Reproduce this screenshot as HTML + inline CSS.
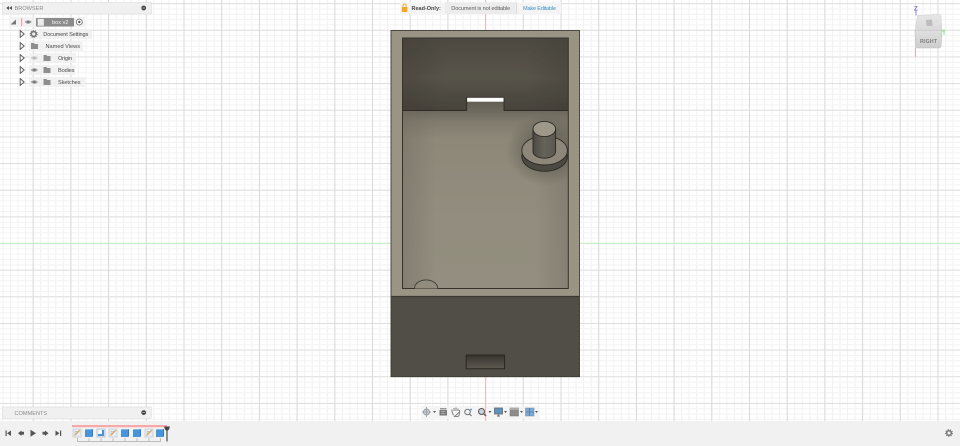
<!DOCTYPE html>
<html><head><meta charset="utf-8">
<style>
html,body{margin:0;padding:0;background:#fff;width:960px;height:446px;overflow:hidden}
svg{display:block;position:absolute;left:0;top:0}
text{font-family:"Liberation Sans",sans-serif;font-size:5.6px;fill:#4a4a4a}
.ui{filter:url(#s)}
</style></head><body>
<svg width="960" height="446" viewBox="0 0 960 446" xmlns="http://www.w3.org/2000/svg">
<defs>
<filter id="s" x="-5%" y="-5%" width="110%" height="110%"><feGaussianBlur stdDeviation="0.38"/></filter>
<filter id="m" x="-5%" y="-5%" width="110%" height="110%"><feGaussianBlur stdDeviation="0.3"/></filter>
<pattern id="minor" patternUnits="userSpaceOnUse" x="2.54" y="3.15" width="7.54" height="5.33">
<path d="M.5 0V5.33" stroke="#f1f1f1" stroke-width="1" fill="none"/>
<path d="M0 .5H7.54" stroke="#f3f3f3" stroke-width="1" fill="none"/>
</pattern>
<pattern id="major" patternUnits="userSpaceOnUse" x="-5" y="3.15" width="37.7" height="26.65">
<path d="M.5 0V26.65" stroke="#d9d9d9" stroke-width="1" fill="none"/>
<path d="M0 .5H37.7" stroke="#dedede" stroke-width="1" fill="none"/>
</pattern>
<linearGradient id="wall" x1="0" y1="0" x2="0" y2="1"><stop offset="0" stop-color="#4c4940"/><stop offset=".55" stop-color="#57534a"/><stop offset="1" stop-color="#46433b"/></linearGradient>
<linearGradient id="wallH" x1="0" y1="0" x2="1" y2="0"><stop offset="0" stop-color="#3a372f" stop-opacity=".35"/><stop offset=".25" stop-color="#3a372f" stop-opacity="0"/><stop offset=".75" stop-color="#3a372f" stop-opacity="0"/><stop offset="1" stop-color="#3a372f" stop-opacity=".3"/></linearGradient>
<linearGradient id="floor" x1="0" y1="0" x2="0" y2="1"><stop offset="0" stop-color="#6d695e"/><stop offset=".06" stop-color="#7f7a6c"/><stop offset=".16" stop-color="#8d8878"/><stop offset=".6" stop-color="#928d7e"/><stop offset="1" stop-color="#938e7f"/></linearGradient>
<linearGradient id="floorH" x1="0" y1="0" x2="1" y2="0"><stop offset="0" stop-color="#6a665b" stop-opacity=".4"/><stop offset=".2" stop-color="#6a665b" stop-opacity="0"/><stop offset=".8" stop-color="#6a665b" stop-opacity="0"/><stop offset="1" stop-color="#6a665b" stop-opacity=".35"/></linearGradient>
<radialGradient id="kshade" cx=".5" cy=".5" r=".5"><stop offset=".55" stop-color="#5f5c52" stop-opacity=".55"/><stop offset="1" stop-color="#5f5c52" stop-opacity="0"/></radialGradient>
<linearGradient id="notch" x1="0" y1="0" x2="0" y2="1"><stop offset="0" stop-color="#5c594f"/><stop offset="1" stop-color="#6d695e"/></linearGradient>
<linearGradient id="cyl" x1="0" y1="0" x2="1" y2="0"><stop offset="0" stop-color="#4c4a43"/><stop offset=".5" stop-color="#66635a"/><stop offset="1" stop-color="#5a574f"/></linearGradient>
<linearGradient id="slot" x1="0" y1="0" x2="0" y2="1"><stop offset="0" stop-color="#35332d"/><stop offset="1" stop-color="#5d5a51"/></linearGradient>
<linearGradient id="cubeT" x1="0" y1="0" x2="0" y2="1"><stop offset="0" stop-color="#e6e6e6"/><stop offset="1" stop-color="#d9d9d9"/></linearGradient>
<linearGradient id="cubeF" x1="0" y1="0" x2="0" y2="1"><stop offset="0" stop-color="#dfdfdf"/><stop offset="1" stop-color="#cdcdcd"/></linearGradient>
<g id="eye"><path d="M-3.8 0Q0-3.4 3.8 0Q0 3.4-3.8 0Z" fill="#a2a2a2"/><circle r="1.3" fill="#777"/></g>
<path id="folder" d="M-3.5-3H-.5L.3-2H3.5V3H-3.5Z" fill="#8e8e8e"/>
<path id="tri" d="M-1.8-3.4L2.2 0L-1.8 3.4Z" fill="#fff" stroke="#555" stroke-width=".9"/>
<g id="sk"><rect x="-4" y="-4" width="8" height="8" fill="#e9edf2" stroke="#b9c3cc" stroke-width=".6"/><path d="M-2.5 2.5L2.8-2.8" stroke="#d8a24a" stroke-width="1.2"/><path d="M-2.5-1.5H1M-2.5 0H-.5" stroke="#8ea6bd" stroke-width=".6"/></g>
<g id="cu"><path d="M-3-4H4V3L3 4H-4V-3Z" fill="#4a94d8"/><path d="M-4-3L-3-4H4L3-3Z" fill="#7db6e8"/><path d="M3-3L4-4V3L3 4Z" fill="#2f78bd"/></g>
<path id="ar" d="M-1.5-1H1.5L0 1Z" fill="#555"/>
<clipPath id="fl"><rect x="402.5" y="110.5" width="165.8" height="178"/></clipPath>
</defs>

<!-- grid -->
<rect width="960" height="446" fill="#fff"/>
<rect width="960" height="446" fill="url(#minor)"/>
<rect width="960" height="446" fill="url(#major)"/>
<rect x="0" y="242.8" width="960" height="1" fill="#c4f2c0"/>
<rect x="485.1" y="0" width="1" height="421" fill="#f5b5b5"/>

<g filter="url(#m)">
<!-- model -->
<rect x="391" y="30.5" width="188.5" height="266" fill="#9a9485"/>
<rect x="402.5" y="110.5" width="165.8" height="178" fill="url(#floor)"/>
<rect x="402.5" y="110.5" width="165.8" height="178" fill="url(#floorH)"/>
<g clip-path="url(#fl)"><ellipse cx="546" cy="150" rx="40" ry="36" fill="url(#kshade)"/></g>
<rect x="402.5" y="38" width="165.8" height="72.5" fill="url(#wall)"/>
<rect x="402.5" y="38" width="165.8" height="72.5" fill="url(#wallH)"/>
<rect x="466.7" y="97.3" width="37.3" height="13.2" fill="url(#notch)"/>
<rect x="466.7" y="97.3" width="37.3" height="4.4" fill="#fff"/>
<path d="M402.5 110.5H466.7V97.3H504V110.5H568.3" fill="none" stroke="#2e2c27" stroke-width=".9"/>
<rect x="402.5" y="38" width="165.8" height="250.5" fill="none" stroke="#34322c" stroke-width="1"/>
<path d="M414.5 288.5A11.6 8.6 0 0 1 437.7 288.5" fill="#918c7d" stroke="#3e3c35" stroke-width=".9"/>
<!-- knob -->
<ellipse cx="544.6" cy="156.5" rx="22.8" ry="14.8" fill="#4b4941" stroke="#2c2a25" stroke-width=".9"/>
<ellipse cx="544.6" cy="150.5" rx="22.8" ry="14.5" fill="#8c8778" stroke="#2c2a25" stroke-width=".9"/>
<path d="M533 129V151.5A11.3 6.7 0 0 0 555.6 151.5V129Z" fill="url(#cyl)" stroke="#2c2a25" stroke-width=".9"/>
<ellipse cx="544.3" cy="129" rx="11.3" ry="7.6" fill="#9d9889" stroke="#2c2a25" stroke-width=".9"/>
<!-- front -->
<rect x="391" y="296" width="188.5" height="80.7" fill="#514e46"/>
<path d="M391 296.5H579.5" stroke="#3b3933" stroke-width="1.2"/>
<rect x="391" y="30.5" width="188.5" height="346.2" fill="none" stroke="#3d3b35" stroke-width=".9"/>
<rect x="466.2" y="355" width="38.4" height="13.8" fill="url(#slot)" stroke="#26241f" stroke-width=".9"/>
</g>

<g class="ui">
<!-- browser panel -->
<rect x="2.3" y="2.5" width="149" height="11.5" fill="#f0f0f0" stroke="#dcdcdc" stroke-width=".6"/>
<path d="M9 6V10L6.2 8ZM12 6V10L9.2 8Z" fill="#555"/>
<text x="14.5" y="10" style="fill:#8a8a8a">BROWSER</text>
<circle cx="143.7" cy="8" r="2.4" fill="#444"/><rect x="142.4" y="7.6" width="2.6" height=".8" fill="#bbb"/>

<rect x="9" y="17" width="76" height="10" fill="#f0f0f0" opacity=".75"/>
<path d="M10.5 24.5L16 19.5V24.5Z" fill="#777"/>
<rect x="21" y="18" width="1.2" height="8" fill="#f3a3a3"/>
<use href="#eye" x="28.2" y="22"/>
<rect x="36" y="18" width="38" height="8.5" rx=".8" fill="#8b8b8b"/>
<rect x="37.5" y="18.6" width="6.5" height="7.3" fill="#ececec" stroke="#999" stroke-width=".4"/>
<text x="52" y="24.2" style="fill:#f4f4f4">box v2</text>
<circle cx="79.3" cy="22" r="3" fill="#fff" stroke="#666" stroke-width=".8"/><circle cx="79.3" cy="22" r="1.2" fill="#555"/>

<rect x="29" y="29" width="63" height="10" fill="#f0f0f0" opacity=".85"/>
<rect x="29" y="41" width="54" height="10" fill="#f0f0f0" opacity=".85"/>
<rect x="29" y="53" width="47" height="10" fill="#f0f0f0" opacity=".85"/>
<rect x="29" y="65" width="46" height="10" fill="#f0f0f0" opacity=".85"/>
<rect x="29" y="77" width="56" height="10" fill="#f0f0f0" opacity=".85"/>

<use href="#tri" x="22" y="34"/><use href="#tri" x="22" y="46"/><use href="#tri" x="22" y="58"/><use href="#tri" x="22" y="70"/><use href="#tri" x="22" y="82"/>

<circle cx="33.7" cy="34" r="2.4" fill="none" stroke="#777" stroke-width="1.6"/>
<circle cx="33.7" cy="34" r="3.5" fill="none" stroke="#777" stroke-width=".9" stroke-dasharray="1.1 1.1"/>
<text x="43.3" y="36" textLength="45">Document Settings</text>

<use href="#folder" x="34.5" y="46"/>
<text x="45.5" y="48" textLength="34.5">Named Views</text>

<use href="#eye" x="34.3" y="58" opacity=".45"/><use href="#folder" x="47" y="58"/>
<text x="58" y="60" textLength="14">Origin</text>
<use href="#eye" x="34.3" y="70"/><use href="#folder" x="47" y="70"/>
<text x="58" y="72" textLength="16.5">Bodies</text>
<use href="#eye" x="34.3" y="82"/><use href="#folder" x="47" y="82"/>
<text x="58" y="84" textLength="22.5">Sketches</text>

<!-- read-only bar -->
<rect x="400" y="2.3" width="161" height="11.7" fill="#f4f4f4"/>
<rect x="445" y="2.3" width="71" height="11.7" fill="#ececec"/>
<rect x="516" y="2.3" width=".8" height="11.7" fill="#d8d8d8"/>
<rect x="401.8" y="7" width="5.6" height="5" rx=".6" fill="#f5a623"/>
<path d="M403 7V5.6A1.6 1.6 0 0 1 406.2 5.6V7" fill="none" stroke="#f5a623" stroke-width=".9"/>
<text x="411.5" y="10" style="fill:#444;font-weight:bold;font-size:5.5px">Read-Only:</text>
<text x="451.3" y="10" textLength="59" style="fill:#5c5c5c">Document is not editable</text>
<text x="523" y="10" textLength="33" style="fill:#3d8fc9">Make Editable</text>

<!-- view cube -->
<path d="M916 10V15.5" stroke="#8a8ae8" stroke-width="1"/>
<text x="914" y="10.5" style="fill:#6a6ae0;font-size:6px;font-weight:bold">Z</text>
<path d="M915.5 47.5V57" stroke="#f2a8a8" stroke-width="1"/>
<path d="M941.5 31H945" stroke="#8fe08f" stroke-width="1"/>
<path d="M944 29V35" stroke="#8fe08f" stroke-width="1"/>
<path d="M917.5 15.5L939 14.5Q940.5 14.5 941 16L942 30.5H915Z" fill="url(#cubeT)" stroke="#cfcfcf" stroke-width=".5"/>
<path d="M915 30.5H942L941 46Q940.5 48 938 48H918Q916 48 915.5 46Z" fill="url(#cubeF)" stroke="#bdbdbd" stroke-width=".6"/>
<path d="M926 20L932 19.5L932.5 26L926.5 26Z" fill="#bdbdbd"/>
<text x="928.5" y="43.2" text-anchor="middle" textLength="17" style="fill:#808080;font-weight:bold;font-size:5.2px">RIGHT</text>

<!-- comments -->
<rect x="2.3" y="407" width="149" height="11.3" fill="#f0f0f0" stroke="#dcdcdc" stroke-width=".6"/>
<text x="14.5" y="414.8" style="fill:#8a8a8a">COMMENTS</text>
<circle cx="143.7" cy="412.6" r="2.4" fill="#444"/><rect x="142.4" y="412.2" width="2.6" height=".8" fill="#bbb"/>

<!-- nav toolbar -->
<rect x="421" y="406" width="119" height="13" fill="#f4f4f4" opacity=".9"/>
<rect x="485.1" y="406" width="1" height="13" fill="#f5b5b5"/>
<circle cx="426.5" cy="412" r="3" fill="#c8d4de" stroke="#888" stroke-width=".8"/>
<path d="M426.5 407V417M422 412H431" stroke="#999" stroke-width=".8"/>
<use href="#ar" x="434.5" y="412"/>
<rect x="439.5" y="410" width="7.5" height="5.5" fill="#777"/><rect x="440" y="408" width="6.5" height="1.5" fill="#999"/><path d="M441 411.5H445.5M441 413.5H445.5" stroke="#ddd" stroke-width=".6"/>
<path d="M453.5 415.5L452 411.5V409.5M454 411V408M456 411V407.5M458 411V408.5M459.5 412V410M459.5 412L459 415.5L458 416.5H454.5Z" fill="#eee" stroke="#666" stroke-width=".8"/>
<circle cx="467.5" cy="412" r="2.8" fill="#eef2f5" stroke="#666" stroke-width=".9"/><path d="M469.5 414L471.5 416" stroke="#666" stroke-width="1"/><path d="M471 408.5V410.5M470 409.5H472" stroke="#4a8cc0" stroke-width=".7"/>
<circle cx="481.5" cy="411.5" r="3" fill="#c8d4de" stroke="#555" stroke-width="1"/><path d="M483.7 413.7L486 416" stroke="#555" stroke-width="1.3"/>
<use href="#ar" x="490" y="412"/>
<rect x="494.5" y="408" width="8" height="6" fill="#5b93bf" stroke="#666" stroke-width=".8"/><path d="M497 416H500M498.5 414.5V416" stroke="#666" stroke-width=".9"/>
<use href="#ar" x="505.5" y="412"/>
<rect x="510" y="408" width="8.5" height="8" fill="#8c8c8c" stroke="#777" stroke-width=".5"/><rect x="510" y="408" width="8.5" height="2" fill="#aaa"/>
<use href="#ar" x="521.5" y="412"/>
<rect x="525.5" y="408" width="8.5" height="8" fill="#7fa9d2" stroke="#6f8ba8" stroke-width=".5"/><path d="M529.7 408V416M525.5 412H534" stroke="#3f6a96" stroke-width=".6"/>
<use href="#ar" x="536.5" y="412"/>

<!-- bottom bar -->
<rect x="0" y="421" width="960" height="25" fill="#f1f1f1"/>
<rect x="5.5" y="430.5" width="1.2" height="5.5" fill="#555"/><path d="M11 430.5V436L7 433.2Z" fill="#555"/>
<path d="M18 433.2L21.5 430.5V436ZM21.5 431.8H24V434.6H21.5Z" fill="#555"/>
<path d="M30.5 429.8L36 433.2L30.5 436.7Z" fill="#555"/>
<path d="M48.5 433.2L45 430.5V436ZM45 431.8H42.5V434.6H45Z" fill="#555"/>
<path d="M55.5 430.5V436L59.5 433.2Z" fill="#555"/><rect x="60" y="430.5" width="1.2" height="5.5" fill="#555"/>

<rect x="72" y="425" width="95" height="2.2" fill="#f7a8a8"/>
<path d="M77.5 438V441.5H160.5V438" fill="none" stroke="#aaa" stroke-width=".7"/>
<path d="M89 438V441.5M101 438V441.5M113 438V441.5M125 438V441.5M137 438V441.5M149 438V441.5" stroke="#aaa" stroke-width=".7"/>
<use href="#sk" x="77" y="433"/>
<use href="#cu" x="89" y="433"/>
<g transform="translate(101 433)"><rect x="-4" y="-4" width="8" height="8" fill="#e4e9ee" stroke="#9fb0bf" stroke-width=".6"/><path d="M-3-3H1V1H-3Z" fill="#f5f7f9"/><path d="M1-3H3V3H-3V1H1Z" fill="#4a94d8"/></g>
<use href="#sk" x="113" y="433"/>
<use href="#cu" x="125" y="433"/>
<use href="#cu" x="137" y="433"/>
<use href="#sk" x="149" y="433"/>
<use href="#cu" x="160" y="433"/>
<rect x="166.2" y="429" width="1.6" height="12.5" fill="#777"/>
<path d="M164 426.5H170L169 429.5L167 431L165 429.5Z" fill="#444"/>

<circle cx="949" cy="433" r="2.3" fill="none" stroke="#777" stroke-width="1.5"/>
<circle cx="949" cy="433" r="3.4" fill="none" stroke="#777" stroke-width="1" stroke-dasharray="1.2 1.2"/>
</g>
</svg>
</body></html>
